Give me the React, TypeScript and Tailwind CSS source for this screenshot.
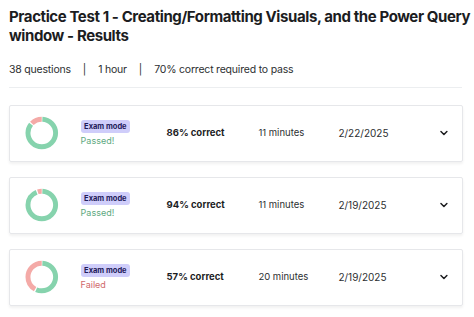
import React from "react";

function Donut({ pct }: { pct: number }) {
  const r = 14;
  const c = 2 * Math.PI * r;
  const gap = 1.2;
  const g = (pct / 100) * c;
  const red = c - g;
  return (
    <svg width="34" height="34" viewBox="0 0 34 34">
      <g transform="rotate(-90 17 17)">
        <circle
          cx="17"
          cy="17"
          r={r}
          fill="none"
          stroke="#86d3ad"
          strokeWidth="5"
          strokeDasharray={`${g - gap} ${c}`}
          strokeDashoffset={-gap / 2}
        />
        <circle
          cx="17"
          cy="17"
          r={r}
          fill="none"
          stroke="#f4aaa7"
          strokeWidth="5"
          strokeDasharray={`${Math.max(red - gap, 0.6)} ${c}`}
          strokeDashoffset={-(g + gap / 2)}
        />
      </g>
    </svg>
  );
}

const rows = [
  { pct: 86, passed: true, time: "11 minutes", date: "2/22/2025" },
  { pct: 94, passed: true, time: "11 minutes", date: "2/19/2025" },
  { pct: 57, passed: false, time: "20 minutes", date: "2/19/2025" },
];

export default function App() {
  return (
    <div
      className="w-[474px] h-[317px] bg-white px-[9px] pt-[7px] text-[#1c1d1f] overflow-hidden"
      style={{ fontFamily: "Inter, 'Noto Sans', sans-serif" }}
    >
      <h1 className="text-[15px] leading-[19px] font-bold tracking-[-0.4px] whitespace-nowrap">
        <span className="block">Practice Test 1 - Creating/Formatting Visuals, and the Power Query</span>
        <span className="block">window - Results</span>
      </h1>
      <div className="mt-[17px] flex items-center text-[10.5px] tracking-[-0.2px] text-[#2d2f31]">
        <span>38 questions</span>
        <span className="mx-[12px] text-[#2d2f31]">|</span>
        <span>1 hour</span>
        <span className="mx-[12px] text-[#2d2f31]">|</span>
        <span>70% correct required to pass</span>
      </div>
      <div className="mt-[9px] h-px w-[453px] bg-[#eceef0]" />
      <div className="mt-[17px] flex flex-col gap-[15px] w-[454px]">
        {rows.map((r, i) => (
          <div
            key={i}
            className="h-[57px] flex items-center border border-[#e6e7ea] rounded-[2px] shadow-[0_2px_3px_rgba(0,0,0,0.06)] pl-[15px] pr-[12px]"
          >
            <Donut pct={r.pct} />
            <div className="ml-[22px] w-[87px] flex flex-col items-start">
              <span className="bg-[#cfcdfa] text-[#1f1b5a] text-[7.5px] font-bold leading-[13px] px-[3.5px] rounded-[3px]">
                Exam mode
              </span>
              <span
                className={`text-[9px] leading-[13px] mt-[1px] ${
                  r.passed ? "text-[#5ea97f]" : "text-[#d0696b]"
                }`}
              >
                {r.passed ? "Passed!" : "Failed"}
              </span>
            </div>
            <div className="w-[93px] text-[9.5px] font-bold">{r.pct}% correct</div>
            <div className="w-[81px] text-[9.5px] text-[#2d2f31]">{r.time}</div>
            <div className="w-[101px] text-[10px] text-[#2d2f31]">{r.date}</div>
            <svg width="12" height="12" viewBox="0 0 24 24" fill="none" stroke="#1c1d1f" strokeWidth="3" strokeLinecap="round" strokeLinejoin="round">
              <path d="M6 9l6 6 6-6" />
            </svg>
          </div>
        ))}
      </div>
    </div>
  );
}
